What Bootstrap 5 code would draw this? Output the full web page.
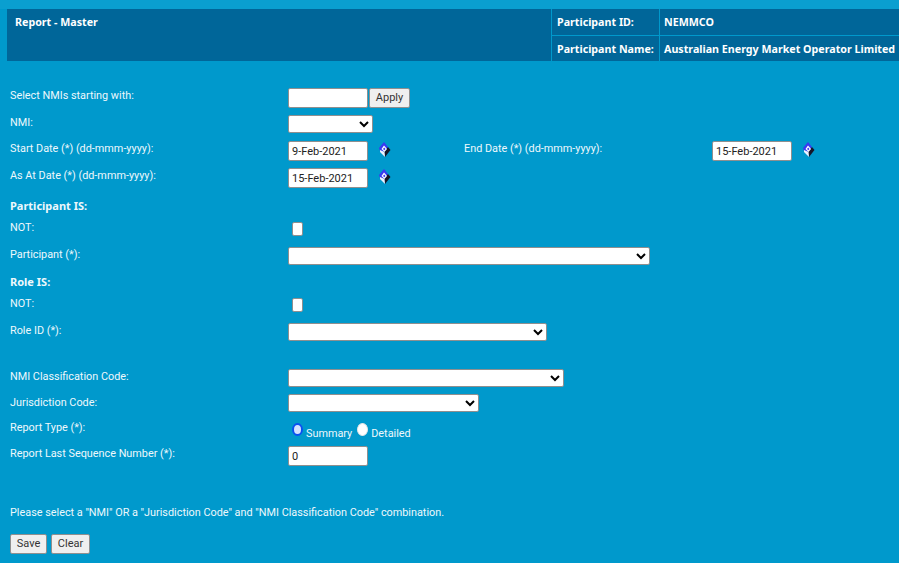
<!DOCTYPE html>
<html lang="en">
<head>
  <meta charset="UTF-8" />
  <meta name="viewport" content="width=device-width, initial-scale=1.0"/>
  <title>Report - Master</title>
  <link href="https://cdn.jsdelivr.net/npm/bootstrap@5.3.2/dist/css/bootstrap.min.css" rel="stylesheet">
  <style>
    body { background: #0099cc; color: #eef8fc; font-family: Roboto, "Liberation Sans", sans-serif; font-size: 10.85px; line-height: 16px; overflow: hidden; }
    .top-gap { height: 9px; background: #0a9fd0; }
    .report-head { margin-left: 7px; background: #006699; color: #fff; height: 52px; font-family: "Noto Sans", sans-serif; font-size: 10.7px; font-weight: 700; }
    .head-title { width: 544px; padding: 5px 8px; }
    .head-info { width: 348px; border-left: 1px solid #0099cc; }
    .head-row { height: 26px; }
    .head-row + .head-row { border-top: 1px solid #0099cc; }
    .head-label { width: 108px; padding: 5px 0 0 5px; border-right: 1px solid #0099cc; white-space: nowrap; }
    .head-value { padding: 5px 0 0 4px; white-space: nowrap; }
    .report-form { display: grid; margin: 27px 0 0 10px; grid-template-columns: 278px 176px 248px 1fr; grid-template-rows: 27px 26px 27px 30px 22px 27px 27px 22px 27px 46px 25px 26px 26px 59px 29px auto; }
    .span-rest { grid-column: 2 / -1; }
    .span-all { grid-column: 1 / -1; }
    .group-title { font-family: "Noto Sans", sans-serif; font-size: 11px; font-weight: 700; grid-column: 1 / -1; }
    .field { height: 20px; width: 80px; padding: 1px 3px; font-size: 11px; line-height: 16px; border: 1px solid #8f8f8f; border-radius: 2px; color: #222; font-family: inherit; }
    .pick { height: 18px; padding: 0; font-size: 11px; border: 1px solid #8f8f8f; border-radius: 2px; background-image: url("data:image/svg+xml,%3csvg xmlns='http://www.w3.org/2000/svg' viewBox='0 0 10 8'%3e%3cpath fill='none' stroke='%23000' stroke-width='2' d='M1 2l4 4 4-4'/%3e%3c/svg%3e"); background-position: right 3px center; background-size: 10px 8px; }
    .pick-nmi { width: 85px; }
    .pick-wide { width: 362px; }
    .pick-role { width: 259px; }
    .pick-class { width: 276px; }
    .pick-juris { width: 191px; }
    .date-icon { margin-left: 11px; margin-top: 1px; flex: none; }
    .plain-btn { height: 20px; padding: 0; font-size: 11px; line-height: 16px; color: #333; background: #efefef; border: 1px solid #8f8f8f; border-radius: 2px; font-family: inherit; }
    .btn-apply { width: 41px; margin-left: 1px; }
    .btn-save { width: 37px; }
    .btn-clear { width: 39px; }
    .tick { appearance: none; display: block; width: 11px; height: 14px; margin: 2px 0 0 4px; background: #fff; border: 1px solid #8f8f8f; border-radius: 2px; }
    .radio-set { margin-top: 3px; padding-left: 4px; display: flex; }
    .radio-set input { appearance: none; width: 11px; height: 13px; margin: 0 3px 0 0; background: #fff; border: 1px solid #e6e6e6; border-radius: 50%; }
    .radio-set input:checked { background: #d4e2ff; border: 2px solid #0a50f0; }
    .radio-set label { margin-top: 3px; }
    .radio-set label + input { margin-left: 5px; }
    .nudge { padding-top: 1px; }
  </style>
</head>
<body>
  <div class="top-gap"></div>
  <div class="report-head d-flex">
    <div class="head-title">Report - Master</div>
    <div class="head-info">
      <div class="head-row d-flex"><div class="head-label">Participant ID:</div><div class="head-value">NEMMCO</div></div>
      <div class="head-row d-flex"><div class="head-label">Participant Name:</div><div class="head-value">Australian Energy Market Operator Limited</div></div>
    </div>
  </div>

  <form class="report-form">
    <div>Select NMIs starting with:</div>
    <div class="span-rest d-flex"><input class="field" type="text"><button type="button" class="plain-btn btn-apply">Apply</button></div>

    <div>NMI:</div>
    <div class="span-rest"><select class="form-select pick pick-nmi"></select></div>

    <div>Start Date (*) (dd-mmm-yyyy):</div>
    <div class="d-flex"><input class="field" type="text" value="9-Feb-2021"><svg class="date-icon" width="12" height="16" viewBox="0 0 12 16"><use href="#cal"/></svg></div>
    <div>End Date (*) (dd-mmm-yyyy):</div>
    <div class="d-flex"><input class="field" type="text" value="15-Feb-2021"><svg class="date-icon" width="12" height="16" viewBox="0 0 12 16"><use href="#cal"/></svg></div>

    <div>As At Date (*) (dd-mmm-yyyy):</div>
    <div class="span-rest d-flex"><input class="field" type="text" value="15-Feb-2021"><svg class="date-icon" width="12" height="16" viewBox="0 0 12 16"><use href="#cal"/></svg></div>

    <div class="group-title">Participant IS:</div>

    <div>NOT:</div>
    <div class="span-rest"><input class="tick" type="checkbox"></div>

    <div>Participant (*):</div>
    <div class="span-rest"><select class="form-select pick pick-wide"></select></div>

    <div class="group-title">Role IS:</div>

    <div>NOT:</div>
    <div class="span-rest"><input class="tick" type="checkbox"></div>

    <div>Role ID (*):</div>
    <div class="span-rest"><select class="form-select pick pick-role"></select></div>

    <div>NMI Classification Code:</div>
    <div class="span-rest"><select class="form-select pick pick-class"></select></div>

    <div class="nudge">Jurisdiction Code:</div>
    <div class="span-rest"><select class="form-select pick pick-juris"></select></div>

    <div>Report Type (*):</div>
    <div class="span-rest radio-set"><input type="radio" name="rtype" id="rs" checked><label for="rs">Summary</label><input type="radio" name="rtype" id="rd"><label for="rd">Detailed</label></div>

    <div>Report Last Sequence Number (*):</div>
    <div class="span-rest"><input class="field" type="text" value="0"></div>

    <div class="span-all">Please select a "NMI" OR a "Jurisdiction Code" and "NMI Classification Code" combination.</div>

    <div class="span-all d-flex gap-1"><button type="button" class="plain-btn btn-save">Save</button><button type="button" class="plain-btn btn-clear">Clear</button></div>
  </form>

  <svg width="0" height="0" class="position-absolute">
    <symbol id="cal" viewBox="0 0 12 16">
      <path d="M5 0 9 5 6 10 1 9 0 6Z" fill="#3a3af0"/>
      <path d="M9 5 11.500 8 6 15 5 10Z" fill="#161628"/>
      <path d="M5 3.500 8 7 5.500 10 2.500 7Z" fill="#fff"/>
      <path d="M5.200 5.500 6.500 7 5.300 8.200 4 7Z" fill="#3a3af0"/>
      <path d="M1 8 5.500 10 6 15 1 10Z" fill="#eef2ff"/>
    </symbol>
  </svg>
</body>
</html>
